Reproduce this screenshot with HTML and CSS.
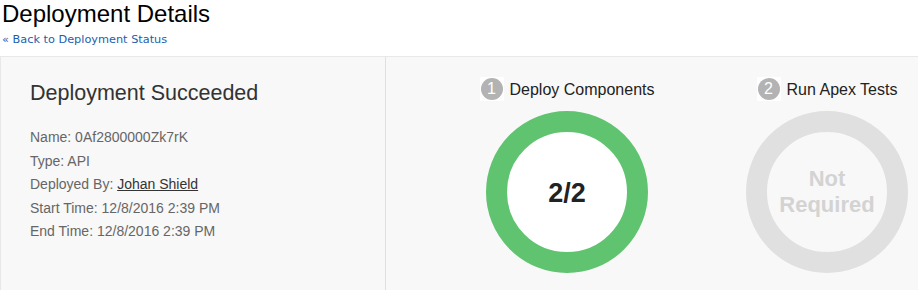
FILE: index.html
```html
<!DOCTYPE html>
<html lang="en">
<head>
  <meta charset="UTF-8">
  <title>Deployment Details</title>
  <link rel="stylesheet" href="styles.css">
</head>
<body>

<h1 class="page-title">Deployment Details</h1>
<a class="back-link" href="#">&laquo; Back to Deployment Status</a>

<div class="panel">
  <div class="summary">
    <h2>Deployment Succeeded</h2>
    <ul class="details">
      <li>Name: 0Af2800000Zk7rK</li>
      <li>Type: API</li>
      <li>Deployed By: <a href="#" class="user-link">Johan Shield</a></li>
      <li>Start Time: 12/8/2016 2:39 PM</li>
      <li>End Time: 12/8/2016 2:39 PM</li>
    </ul>
  </div>

  <div class="steps">
    <div class="step">
      <div class="step-head">
        <span class="badge"><span>1</span></span>
        <span class="step-label">Deploy Components</span>
      </div>
      <div class="donut donut-done">
        <span class="count">2/2</span>
      </div>
    </div>

    <div class="step">
      <div class="step-head">
        <span class="badge"><span>2</span></span>
        <span class="step-label">Run Apex Tests</span>
      </div>
      <div class="donut donut-off">
        <span class="not-req">Not<br>Required</span>
      </div>
    </div>
  </div>
</div>

</body>
</html>
```

FILE: styles.css
```css
* { box-sizing: border-box; }

body {
  margin: 0;
  font-family: 'Liberation Sans', Arial, sans-serif;
  background: white;
  overflow: hidden;
}

.page-title {
  margin: 0;
  padding-left: 2px;
  font-size: 24px;
  line-height: 28px;
  font-weight: normal;
  color: #000;
}

.back-link {
  display: block;
  margin-top: 4px;
  padding-left: 2px;
  font-family: 'DejaVu Sans', Verdana, sans-serif;
  font-size: 11.3px;
  line-height: 16px;
  color: #1b5eb0;
  text-decoration: none;
}

.panel {
  display: flex;
  margin-top: 8px;
  height: 240px;
  background: #f8f8f8;
  border-top: 1px solid #e8e8e8;
  border-left: 1px solid #e8e8e8;
}

.summary {
  width: 385px;
  flex-shrink: 0;
  padding: 24px 0 0 29px;
  border-right: 1px solid #e0e0e0;
}

.summary h2 {
  margin: 0;
  font-size: 21.5px;
  line-height: 25px;
  font-weight: normal;
  color: #333;
}

.details {
  list-style: none;
  margin: 20px 0 0;
  padding: 0;
  font-size: 14px;
  line-height: 23.5px;
  color: #666;
}

.user-link {
  color: #333;
  text-decoration: underline;
}

.steps {
  display: flex;
  padding: 21px 0 0 51px;
}

.step {
  width: 260px;
  flex-shrink: 0;
  display: flex;
  flex-direction: column;
  align-items: center;
}

.step-head {
  display: flex;
  align-items: center;
  gap: 6px;
  height: 22px;
}

.badge {
  width: 24px;
  height: 24px;
  background: white;
  display: flex;
  align-items: center;
  justify-content: center;
}

.badge span {
  width: 22px;
  height: 22px;
  border-radius: 50%;
  background: #b3b3b3;
  color: white;
  font-size: 16px;
  line-height: 22px;
  text-align: center;
}

.step-label {
  font-size: 16px;
  line-height: 22px;
  padding-top: 2px;
  color: #222;
}

.donut {
  margin-top: 11px;
  width: 162px;
  height: 162px;
  border-radius: 50%;
  border: 21px solid;
  display: flex;
  align-items: center;
  justify-content: center;
  text-align: center;
  font-weight: bold;
}

.donut-done {
  border-color: #60c370;
  background: white;
}

.donut-off {
  border-color: #e0e0e0;
  background: #f8f8f8;
}

.count {
  font-size: 27px;
  color: #222;
  padding-top: 3px;
}

.not-req {
  font-size: 22px;
  line-height: 26px;
  color: #d3d3d3;
}
```
